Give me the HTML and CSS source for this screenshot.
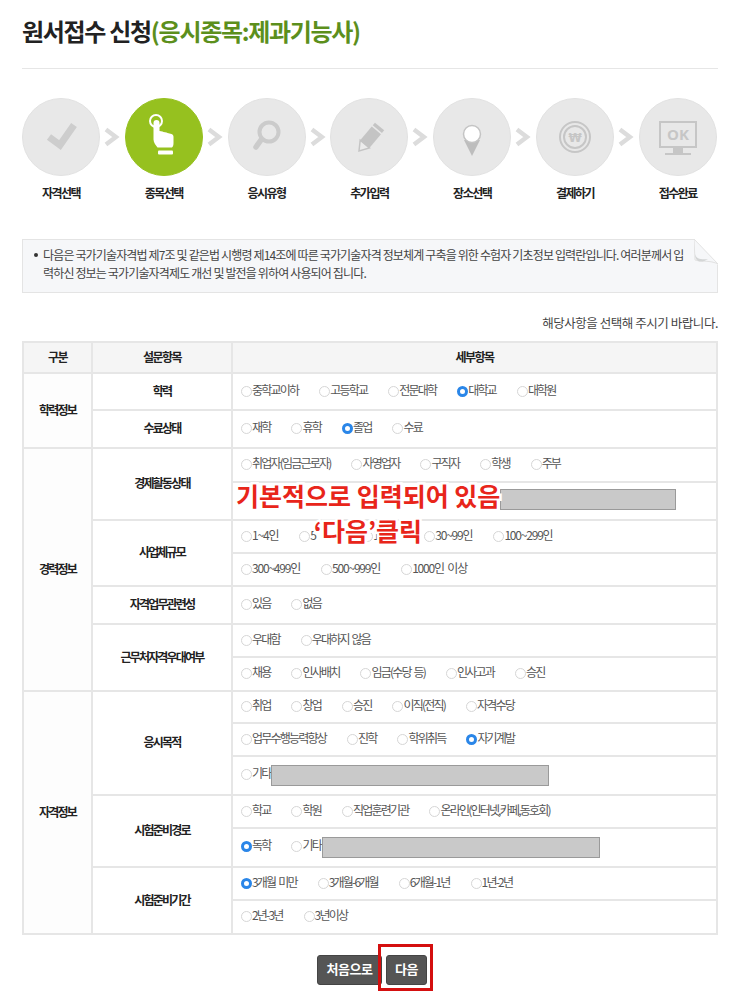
FILE: index.html
```html
<!DOCTYPE html>
<html>
<head>
    <meta charset="utf-8">
    <title>원서접수 신청</title>
    <link rel="stylesheet" href="styles.css">
</head>
<body>
    <div class="container">
        <h1 class="page-title">원서접수 신청<span class="title-sub">(응시종목:제과기능사)</span></h1>

        <div class="steps">
            <div class="step">
                <div class="circle">
                    <svg viewBox="0 0 78 78"><polyline points="27,39 38,47 52,27" fill="none" stroke="#cdcdcd" stroke-width="7"/></svg>
                </div>
                <div class="step-name">자격선택</div>
            </div>
            <svg class="arrow" viewBox="0 0 25 78"><polyline points="6,31.5 16,39 6,46.5" fill="none" stroke="#dcdcdc" stroke-width="4.5"/></svg>
            <div class="step">
                <div class="circle active">
                    <svg viewBox="0 0 78 78">
                        <circle cx="31" cy="23" r="6" fill="none" stroke="#fff" stroke-width="2"/>
                        <path d="M28.5 25a3 3 0 0 1 6 0v8l3 .5 1 .5 3 .5 1 .5 4 1c1.500.5 2 1.500 2 3v6c0 2-.5 3.500-1.500 4.500h-14.500c-1.500-2-4-5-4-8z" fill="#fff"/>
                        <rect x="33" y="52.500" width="15" height="4" rx="1" fill="#fff"/>
                    </svg>
                </div>
                <div class="step-name">종목선택</div>
            </div>
            <svg class="arrow" viewBox="0 0 25 78"><polyline points="6,31.5 16,39 6,46.5" fill="none" stroke="#dcdcdc" stroke-width="4.5"/></svg>
            <div class="step">
                <div class="circle">
                    <svg viewBox="0 0 78 78">
                        <circle cx="41" cy="34" r="9.500" fill="none" stroke="#cbcbcb" stroke-width="4"/>
                        <line x1="33" y1="42" x2="28" y2="49" stroke="#cbcbcb" stroke-width="5.500" stroke-linecap="round"/>
                    </svg>
                </div>
                <div class="step-name">응시유형</div>
            </div>
            <svg class="arrow" viewBox="0 0 25 78"><polyline points="6,31.5 16,39 6,46.5" fill="none" stroke="#dcdcdc" stroke-width="4.5"/></svg>
            <div class="step">
                <div class="circle">
                    <svg viewBox="0 0 78 78">
                        <g transform="translate(29 53) rotate(40)">
                            <polygon points="0,0 -6,-9 6,-9" fill="#ececec" stroke="#c4c4c4" stroke-width="1.500"/>
                            <rect x="-6" y="-27" width="12" height="18" fill="#c4c4c4"/>
                            <rect x="-6" y="-32" width="12" height="3.500" fill="#c4c4c4"/>
                        </g>
                    </svg>
                </div>
                <div class="step-name">추가입력</div>
            </div>
            <svg class="arrow" viewBox="0 0 25 78"><polyline points="6,31.5 16,39 6,46.5" fill="none" stroke="#dcdcdc" stroke-width="4.5"/></svg>
            <div class="step">
                <div class="circle">
                    <svg viewBox="0 0 78 78">
                        <polygon points="31,42 47,42 39,58" fill="#bdbdbd"/>
                        <circle cx="39" cy="36" r="8.500" fill="#fff" stroke="#c4c4c4" stroke-width="1.500"/>
                    </svg>
                </div>
                <div class="step-name">장소선택</div>
            </div>
            <svg class="arrow" viewBox="0 0 25 78"><polyline points="6,31.5 16,39 6,46.5" fill="none" stroke="#dcdcdc" stroke-width="4.5"/></svg>
            <div class="step">
                <div class="circle">
                    <svg viewBox="0 0 78 78">
                        <circle cx="39" cy="39" r="15" fill="none" stroke="#c6c6c6" stroke-width="2"/>
                        <circle cx="39" cy="39" r="11" fill="none" stroke="#c6c6c6" stroke-width="2"/>
                        <text x="39" y="43.500" class="icon-won">₩</text>
                    </svg>
                </div>
                <div class="step-name">결제하기</div>
            </div>
            <svg class="arrow" viewBox="0 0 25 78"><polyline points="6,31.5 16,39 6,46.5" fill="none" stroke="#dcdcdc" stroke-width="4.5"/></svg>
            <div class="step">
                <div class="circle">
                    <svg viewBox="0 0 78 78">
                        <rect x="21" y="24" width="36" height="25" fill="none" stroke="#c6c6c6" stroke-width="2"/>
                        <text x="39" y="42" class="icon-ok">OK</text>
                        <rect x="34" y="50" width="10" height="5" fill="#c6c6c6"/>
                        <rect x="26" y="55" width="26" height="2" fill="#c6c6c6"/>
                    </svg>
                </div>
                <div class="step-name">접수완료</div>
            </div>
        </div>

        <div class="notice">
            <p>다음은 국가기술자격법 제7조 및 같은법 시행령 제14조에 따른 국가기술자격 정보체계 구축을 위한 수험자 기초정보 입력란입니다. 여러분께서 입력하신 정보는 국가기술자격제도 개선 및 발전을 위하여 사용되어 집니다.</p>
            <svg class="fold" viewBox="0 0 24 26">
                <polygon points="0,0 24,26 24,0" fill="#fff"/>
                <path d="M0 0 L24 25 C16 21 8 23 1 21 Z" fill="#f6f7f9" stroke="#e2e2e2"/>
                <path d="M1 15 C2 20 8 21 14 20 C8 24 1 24 1 15 Z" fill="#d4d6d6"/>
            </svg>
        </div>

        <p class="guide">해당사항을 선택해 주시기 바랍니다.</p>

        <div class="survey">
            <table class="survey-table">
                <colgroup>
                    <col class="col-group">
                    <col class="col-question">
                    <col>
                </colgroup>
                <tr class="r31">
                    <th>구분</th>
                    <th>설문항목</th>
                    <th>세부항목</th>
                </tr>

                <tr class="r37">
                    <td class="group" rowspan="2">학력정보</td>
                    <td class="question">학력</td>
                    <td><div class="options">
                        <label class="option"><input type="radio" name="edu">중학교이하</label>
                        <label class="option"><input type="radio" name="edu">고등학교</label>
                        <label class="option"><input type="radio" name="edu">전문대학</label>
                        <label class="option"><input type="radio" name="edu" checked>대학교</label>
                        <label class="option"><input type="radio" name="edu">대학원</label>
                    </div></td>
                </tr>
                <tr class="r38">
                    <td class="question">수료상태</td>
                    <td><div class="options">
                        <label class="option"><input type="radio" name="state">재학</label>
                        <label class="option"><input type="radio" name="state">휴학</label>
                        <label class="option"><input type="radio" name="state" checked>졸업</label>
                        <label class="option"><input type="radio" name="state">수료</label>
                    </div></td>
                </tr>

                <tr class="r34">
                    <td class="group" rowspan="7">경력정보</td>
                    <td class="question" rowspan="2">경제활동상태</td>
                    <td><div class="options">
                        <label class="option"><input type="radio" name="job">취업자(임금근로자)</label>
                        <label class="option"><input type="radio" name="job">자영업자</label>
                        <label class="option"><input type="radio" name="job">구직자</label>
                        <label class="option"><input type="radio" name="job">학생</label>
                        <label class="option"><input type="radio" name="job">주부</label>
                    </div></td>
                </tr>
                <tr class="r38">
                    <td><div class="options">
                        <input class="text-field job-field" type="text">
                    </div></td>
                </tr>
                <tr class="r33">
                    <td class="question" rowspan="2">사업체규모</td>
                    <td><div class="options">
                        <label class="option num"><input type="radio" name="size">1~4인</label>
                        <label class="option num option-under-a"><input type="radio" name="size">5</label>
                        <label class="option num option-under-b"><input type="radio" name="size">1</label>
                        <label class="option num"><input type="radio" name="size">30~99인</label>
                        <label class="option num"><input type="radio" name="size">100~299인</label>
                    </div></td>
                </tr>
                <tr class="r33">
                    <td><div class="options">
                        <label class="option num"><input type="radio" name="size">300~499인</label>
                        <label class="option num"><input type="radio" name="size">500~999인</label>
                        <label class="option num"><input type="radio" name="size">1000인 이상</label>
                    </div></td>
                </tr>
                <tr class="r38">
                    <td class="question">자격업무관련성</td>
                    <td><div class="options">
                        <label class="option"><input type="radio" name="rel">있음</label>
                        <label class="option"><input type="radio" name="rel">없음</label>
                    </div></td>
                </tr>
                <tr class="r33">
                    <td class="question" rowspan="2">근무처자격우대여부</td>
                    <td><div class="options">
                        <label class="option"><input type="radio" name="pref">우대함</label>
                        <label class="option"><input type="radio" name="pref">우대하지 않음</label>
                    </div></td>
                </tr>
                <tr class="r34">
                    <td><div class="options">
                        <label class="option"><input type="radio" name="pref">채용</label>
                        <label class="option"><input type="radio" name="pref">인사배치</label>
                        <label class="option"><input type="radio" name="pref">임금(수당 등)</label>
                        <label class="option"><input type="radio" name="pref">인사고과</label>
                        <label class="option"><input type="radio" name="pref">승진</label>
                    </div></td>
                </tr>

                <tr class="r32">
                    <td class="group" rowspan="7">자격정보</td>
                    <td class="question" rowspan="3">응시목적</td>
                    <td><div class="options">
                        <label class="option"><input type="radio" name="goal">취업</label>
                        <label class="option"><input type="radio" name="goal">창업</label>
                        <label class="option"><input type="radio" name="goal">승진</label>
                        <label class="option"><input type="radio" name="goal">이직(전직)</label>
                        <label class="option"><input type="radio" name="goal">자격수당</label>
                    </div></td>
                </tr>
                <tr class="r33">
                    <td><div class="options">
                        <label class="option"><input type="radio" name="goal">업무수행능력향상</label>
                        <label class="option"><input type="radio" name="goal">진학</label>
                        <label class="option"><input type="radio" name="goal">학위취득</label>
                        <label class="option"><input type="radio" name="goal" checked>자기계발</label>
                    </div></td>
                </tr>
                <tr class="r39">
                    <td><div class="options options-field">
                        <label class="option"><input type="radio" name="goal">기타</label>
                        <input class="text-field" type="text">
                    </div></td>
                </tr>
                <tr class="r33">
                    <td class="question" rowspan="2">시험준비경로</td>
                    <td><div class="options">
                        <label class="option"><input type="radio" name="route">학교</label>
                        <label class="option"><input type="radio" name="route">학원</label>
                        <label class="option"><input type="radio" name="route">직업훈련기관</label>
                        <label class="option"><input type="radio" name="route">온라인(인터넷,카페,동호회)</label>
                    </div></td>
                </tr>
                <tr class="r39">
                    <td><div class="options options-field">
                        <label class="option"><input type="radio" name="route" checked>독학</label>
                        <label class="option"><input type="radio" name="route">기타</label>
                        <input class="text-field" type="text">
                    </div></td>
                </tr>
                <tr class="r33">
                    <td class="question" rowspan="2">시험준비기간</td>
                    <td><div class="options">
                        <label class="option"><input type="radio" name="term" checked>3개월 미만</label>
                        <label class="option"><input type="radio" name="term">3개월-6개월</label>
                        <label class="option"><input type="radio" name="term">6개월-1년</label>
                        <label class="option"><input type="radio" name="term">1년-2년</label>
                    </div></td>
                </tr>
                <tr class="r34">
                    <td><div class="options">
                        <label class="option"><input type="radio" name="term">2년-3년</label>
                        <label class="option"><input type="radio" name="term">3년이상</label>
                    </div></td>
                </tr>
            </table>

            <div class="callout">
                <div class="callout-main">기본적으로 입력되어 있음</div>
                <div class="callout-next">‘다음’클릭</div>
            </div>
        </div>

        <div class="buttons">
            <button class="btn btn-first" type="button">처음으로</button>
            <div class="next-mark">
                <button class="btn btn-next" type="button">다음</button>
            </div>
        </div>
    </div>
</body>
</html>
```

FILE: styles.css
```css
* {
    box-sizing: border-box;
}

body {
    margin: 0;
    background-color: #fff;
    color: #333;
    font-family: "Noto Sans CJK KR", "Noto Sans", sans-serif;
    font-size: 12px;
}

.container {
    padding: 0 22px 16px;
}

.page-title {
    margin: 0;
    height: 69px;
    padding-top: 13px;
    border-bottom: 1px solid #e6e6e6;
    color: #222;
    font-size: 24px;
    font-weight: 700;
    line-height: 36px;
    letter-spacing: -1.3px;
}

.title-sub {
    color: #5c8f1c;
}

/* steps */
.steps {
    display: flex;
    margin-top: 29px;
}

.step {
    width: 78px;
}

.circle {
    width: 78px;
    height: 78px;
    border: 1px solid #e2e2e2;
    border-radius: 50%;
    background-color: #e8e8e8;
}

.circle svg {
    display: block;
    width: 78px;
    height: 78px;
    margin: -1px;
}

.circle.active {
    border-color: #96c11f;
    background-color: #96c11f;
}

.arrow {
    width: 24.8px;
    height: 78px;
}

.step-name {
    margin-top: 8px;
    color: #222;
    font-weight: 700;
    line-height: 18px;
    letter-spacing: -1.5px;
    text-align: center;
}

.icon-won {
    fill: #c6c6c6;
    font-family: "DejaVu Sans", sans-serif;
    font-size: 12px;
    font-weight: 700;
    text-anchor: middle;
}

.icon-ok {
    fill: #c6c6c6;
    font-family: "Open Sans", sans-serif;
    font-size: 15px;
    font-weight: 700;
    text-anchor: middle;
}

/* notice */
.notice {
    position: relative;
    height: 54px;
    margin-top: 37px;
    padding: 6px 30px 0 20px;
    border: 1px solid #e4e4e4;
    background-color: #f6f7f9;
}

.notice p {
    position: relative;
    margin: 0;
    color: #444;
    line-height: 18px;
    letter-spacing: -0.85px;
    word-break: break-all;
}

.notice p::before {
    content: "";
    position: absolute;
    left: -9px;
    top: 7px;
    width: 4px;
    height: 4px;
    border-radius: 50%;
    background-color: #333;
}

.fold {
    position: absolute;
    top: -1px;
    right: -1px;
    width: 24px;
    height: 26px;
}

.guide {
    margin: 21px 0 9px;
    color: #444;
    font-size: 12.5px;
    line-height: 18px;
    letter-spacing: -0.45px;
    text-align: right;
}

/* survey table */
.survey {
    position: relative;
}

.survey-table {
    width: 100%;
    table-layout: fixed;
    border-collapse: collapse;
    border: 2px solid #e6e6e6;
}

.col-group {
    width: 69px;
}

.col-question {
    width: 140px;
}

.survey-table th,
.survey-table td {
    padding: 0;
    border: 2px solid #e6e6e6;
}

.survey-table th {
    padding-bottom: 3px;
    background-color: #f5f5f5;
    color: #222;
    font-weight: 700;
    letter-spacing: -1.5px;
}

.survey-table .group,
.survey-table .question {
    padding-bottom: 3px;
    color: #222;
    font-weight: 700;
    letter-spacing: -1.8px;
    text-align: center;
}

.group {
    background-color: #fdfdfd;
}

.r31 { height: 31px; }
.r32 { height: 32px; }
.r33 { height: 33px; }
.r34 { height: 34px; }
.r37 { height: 37px; }
.r38 { height: 38px; }
.r39 { height: 39px; }

.options {
    display: flex;
    align-items: center;
    gap: 21px;
    padding: 0 0 4px 8px;
}

.options-field {
    padding-bottom: 0;
}

.options-field .option {
    margin-bottom: 6px;
}

.option {
    display: flex;
    align-items: center;
    color: #555;
    line-height: 18px;
    letter-spacing: -1.8px;
    word-spacing: 2px;
    white-space: nowrap;
}

.option.num {
    letter-spacing: -1.2px;
}

.option input {
    appearance: none;
    width: 11px;
    height: 11px;
    margin: 3px 0 0;
    border: 1px solid #d6d6d6;
    border-radius: 50%;
    background-color: #fff;
}

.option input:checked {
    border: 3px solid #2a86e8;
}

/* options the red text sits on */
.option-under-a {
    width: 42px;
}

.option-under-b {
    width: 41px;
}

.text-field {
    width: 278px;
    height: 21px;
    margin-left: -20px;
    border: 1px solid #9a9a9a;
    background-color: #c9c9c9;
}

.job-field {
    width: 176px;
    margin-left: 259px;
}

/* red text on top of the table */
.callout {
    position: absolute;
    left: 214px;
    top: 137px;
    width: 264px;
    color: #e8251a;
    font-size: 25px;
    font-weight: 700;
    line-height: 35px;
    text-align: center;
    white-space: nowrap;
    -webkit-text-stroke: 5px #fff;
    paint-order: stroke fill;
}

/* buttons */
.buttons {
    display: flex;
    justify-content: center;
    gap: 4px;
    margin-top: 20px;
    padding-left: 4px;
}

.btn {
    display: block;
    height: 30px;
    padding: 0 0 3px;
    border: 1px solid #444;
    border-radius: 3px;
    background-color: #555;
    color: #fff;
    font-family: inherit;
    font-size: 13px;
    font-weight: 700;
    letter-spacing: -0.5px;
}

.btn-first {
    width: 65px;
}

.btn-next {
    width: 41px;
}

.next-mark {
    position: relative;
}

.next-mark::after {
    content: "";
    position: absolute;
    left: -8px;
    top: -11px;
    box-sizing: border-box;
    width: 55px;
    height: 47px;
    border: 3px solid #d40f0f;
}
```
